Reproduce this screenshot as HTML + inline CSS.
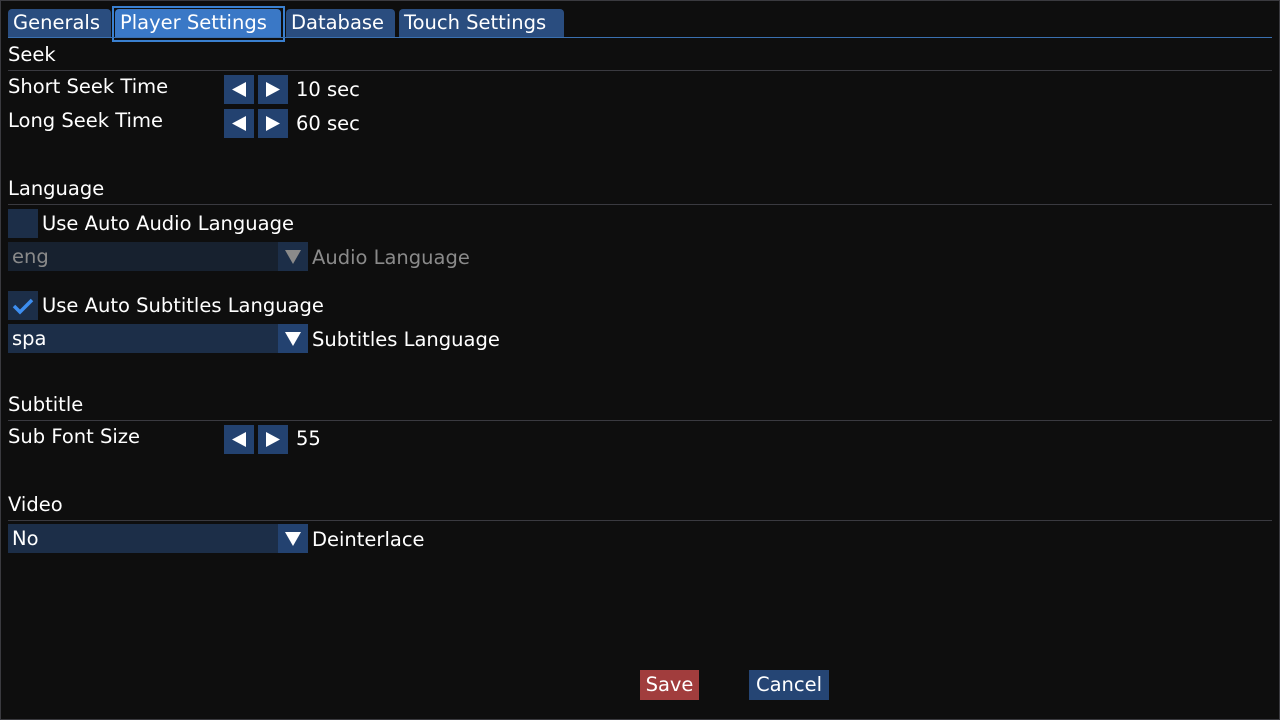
<!DOCTYPE html>
<html><head><style>
*{margin:0;padding:0;box-sizing:border-box}
body{width:1280px;height:720px;background:#0e0e0e;font-family:"DejaVu Sans","Liberation Sans",sans-serif;font-size:19.5px;color:#fff;position:relative;overflow:hidden}
.frame{position:absolute;left:0;top:0;width:1280px;height:720px;border:1px solid #3a3a3f}
.a{position:absolute;white-space:nowrap;line-height:28px}
.tab{position:absolute;top:9px;height:28px;background:#2a4d7f;border-radius:4px 4px 0 0;line-height:28px;padding-left:5px}
.line{position:absolute;left:8px;right:8px;height:1px;background:#3a3a40}
.btn{position:absolute;width:30px;height:29px;background:#234270}
.frm{position:absolute;left:8px;width:270px;height:29px;background:#1c2e48;line-height:29px;padding-left:4px}
.arr{position:absolute;left:278px;width:30px;height:29px;background:#234270}
</style></head><body>
<div class="frame"></div>
<div class="tab" style="left:8px;width:103px">Generals</div>
<div class="tab" style="left:115px;width:166px;background:#3a78c6">Player Settings</div>
<div style="position:absolute;left:112px;top:6px;width:173px;height:36px;border:2px solid #3a80d0"></div>
<div class="tab" style="left:286px;width:109px">Database</div>
<div class="tab" style="left:399px;width:165px">Touch Settings</div>
<div style="position:absolute;left:8px;right:8px;top:37px;height:1px;background:#3a70b0"></div>

<div class="a" style="left:8px;top:41px">Seek</div>
<div class="line" style="top:70px"></div>
<div class="a" style="left:8px;top:73px">Short Seek Time</div>
<div class="btn" style="left:224px;top:75px"></div><div class="btn" style="left:258px;top:75px"></div>
<div class="a" style="left:296px;top:76px">10 sec</div>
<div class="a" style="left:8px;top:107px">Long Seek Time</div>
<div class="btn" style="left:224px;top:109px"></div><div class="btn" style="left:258px;top:109px"></div>
<div class="a" style="left:296px;top:110px">60 sec</div>

<div class="a" style="left:8px;top:175px">Language</div>
<div class="line" style="top:204px"></div>
<div style="position:absolute;left:8px;top:209px;width:30px;height:29px;background:#1c2e48"></div>
<div class="a" style="left:42px;top:210px">Use Auto Audio Language</div>
<div class="frm" style="top:242px;color:#8a8a8a;background:#17212f">eng</div>
<div class="arr" style="top:242px;background:#1c2e48"></div>
<div class="a" style="left:312px;top:244px;color:#8a8a8a">Audio Language</div>
<div style="position:absolute;left:8px;top:291px;width:30px;height:29px;background:#1c2e48"></div>
<svg style="position:absolute;left:8px;top:291px" width="30" height="29"><path d="M6 15 L12 21 L24 9" stroke="#3d8ef0" stroke-width="3.5" fill="none"/></svg>
<div class="a" style="left:42px;top:292px">Use Auto Subtitles Language</div>
<div class="frm" style="top:324px">spa</div>
<div class="arr" style="top:324px"></div>
<div class="a" style="left:312px;top:326px">Subtitles Language</div>

<div class="a" style="left:8px;top:391px">Subtitle</div>
<div class="line" style="top:420px"></div>
<div class="a" style="left:8px;top:423px">Sub Font Size</div>
<div class="btn" style="left:224px;top:425px"></div><div class="btn" style="left:258px;top:425px"></div>
<div class="a" style="left:296px;top:425px">55</div>

<div class="a" style="left:8px;top:491px">Video</div>
<div class="line" style="top:520px"></div>
<div class="frm" style="top:524px">No</div>
<div class="arr" style="top:524px"></div>
<div class="a" style="left:312px;top:526px">Deinterlace</div>

<svg style="position:absolute;left:0;top:0" width="600" height="720" fill="#fff">
<path d="M232 89.5 L246 82 L246 97Z"/><path d="M266 82 L280 89.5 L266 97Z"/>
<path d="M232 123.5 L246 116 L246 131Z"/><path d="M266 116 L280 123.5 L266 131Z"/>
<path d="M232 439.5 L246 432 L246 447Z"/><path d="M266 432 L280 439.5 L266 447Z"/>
<path d="M285 250 L301 250 L293 264Z" fill="#8a8a8a"/>
<path d="M285 332 L301 332 L293 346Z"/>
<path d="M285 532 L301 532 L293 546Z"/>
</svg>

<div class="a" style="left:640px;top:670px;width:59px;height:30px;background:#a13d3d;text-align:center;line-height:30px">Save</div>
<div class="a" style="left:749px;top:670px;width:80px;height:30px;background:#254574;text-align:center;line-height:30px">Cancel</div>
</body></html>
